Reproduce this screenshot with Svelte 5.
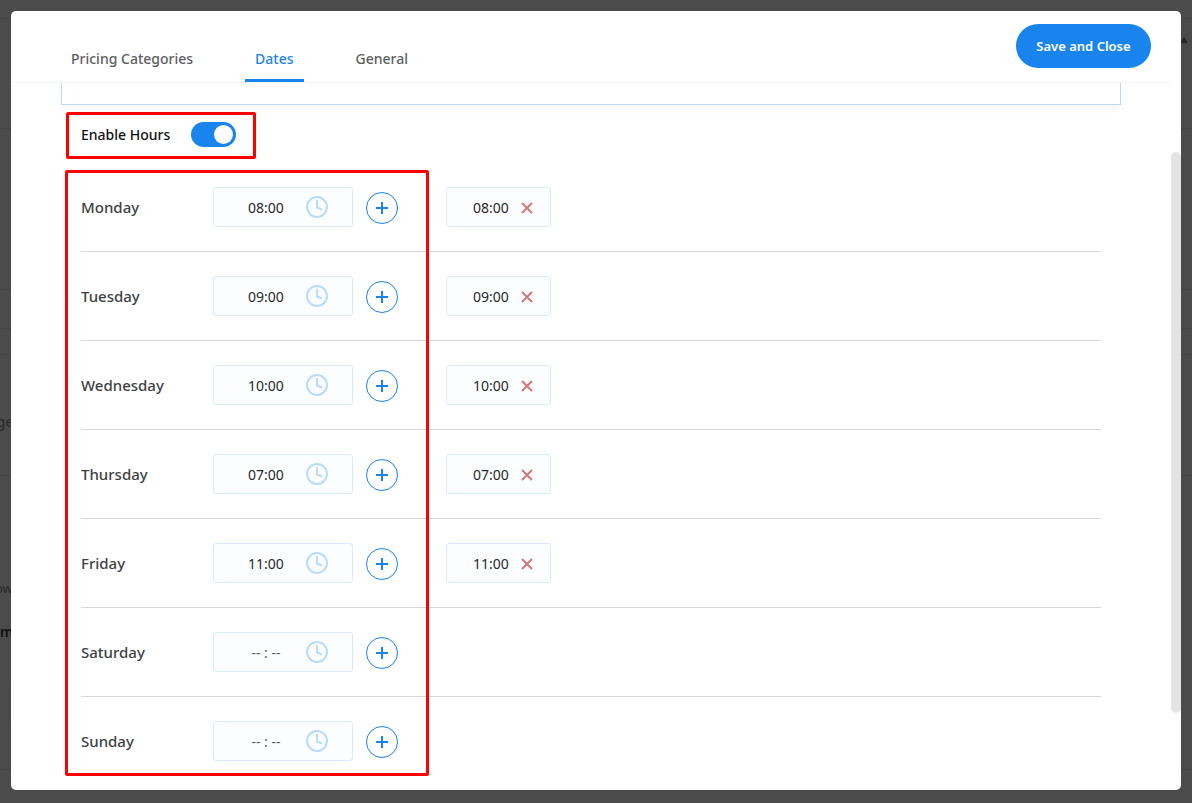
<script>
  const tabs = ['Pricing Categories', 'Dates', 'General'];
  let active = $state('Dates');
  let hoursEnabled = $state(true);
  let days = $state([
    { name: 'Monday', time: '08:00', saved: ['08:00'] },
    { name: 'Tuesday', time: '09:00', saved: ['09:00'] },
    { name: 'Wednesday', time: '10:00', saved: ['10:00'] },
    { name: 'Thursday', time: '07:00', saved: ['07:00'] },
    { name: 'Friday', time: '11:00', saved: ['11:00'] },
    { name: 'Saturday', time: '', saved: [] },
    { name: 'Sunday', time: '', saved: [] }
  ]);

  function add(day) {
    if (day.time) day.saved.push(day.time);
  }

  // Divider lines of the dimmed page behind the dialog
  const dividers = [18, 128, 289, 328, 354, 475, 769];
</script>

<div class="page">
  <div class="backdrop" aria-hidden="true">
    {#each dividers as y}
      <i class="divider" style="top: {y}px"></i>
    {/each}
    <i class="field"></i>
    <span class="peek peek-a">ge</span>
    <span class="peek peek-b">ow</span>
    <span class="peek peek-c">m</span>
    <svg class="caret" width="10" height="6" viewBox="0 0 10 6"><path d="M5 0L9 6H1Z" fill="#25272b" /></svg>
  </div>

  <main class="dialog">
    <header>
      <nav>
        {#each tabs as tab}
          <button class="tab" class:active={tab === active} onclick={() => (active = tab)}>{tab}</button>
        {/each}
      </nav>
      <button class="save">Save and Close</button>
    </header>

    <div class="panel"></div>

    <section class="content">
      <div class="enable">
        <label for="hours">Enable Hours</label>
        <input id="hours" class="toggle" type="checkbox" bind:checked={hoursEnabled} />
      </div>

      <div class="schedule">
        {#each days as day, i}
          <div class="row">
            <label class="day" for="time-{i}">{day.name}</label>
            <div class="time">
              <input id="time-{i}" type="text" placeholder="-- : --" bind:value={day.time} />
              <svg width="22" height="22" viewBox="0 0 22 22" fill="none" stroke="#b9dcfb" stroke-width="2">
                <circle cx="11" cy="11" r="10" />
                <path d="M11 4V11.5L16 13.5" />
              </svg>
            </div>
            <button class="add" aria-label="Add" onclick={() => add(day)}>
              <svg width="12" height="12" viewBox="0 0 12 12"><path d="M6 0V12M0 6H12" stroke="#1a84ee" stroke-width="2" /></svg>
            </button>
            {#each day.saved as time, j}
              <div class="saved">
                <span>{time}</span>
                <button aria-label="Remove" onclick={() => day.saved.splice(j, 1)}>
                  <svg width="12" height="12" viewBox="0 0 12 12"><path d="M1 1L11 11M11 1L1 11" stroke="#d47777" stroke-width="2" /></svg>
                </button>
              </div>
            {/each}
          </div>
        {/each}
      </div>
    </section>
    <i class="thumb"></i>
  </main>
</div>

<style>
  :global(body) {
    margin: 0;
    background: #4b4b4b;
  }
  .page {
    position: relative;
    box-sizing: border-box;
    min-height: 100vh;
    padding: 11px 11px 13px;
    overflow: hidden;
    font-family: 'Segoe UI', 'Noto Sans', sans-serif;
    color: #3d3f42;
  }
  button,
  input {
    font: inherit;
    margin: 0;
    padding: 0;
    border: 0;
    background: none;
  }
  button {
    cursor: pointer;
  }
  svg {
    display: block;
    flex: none;
  }
  .backdrop {
    position: absolute;
    inset: 0;
  }
  .divider {
    position: absolute;
    left: 0;
    right: 0;
    height: 1px;
    background: #424446;
  }
  .field {
    position: absolute;
    top: 687px;
    left: 8px;
    width: 100px;
    height: 38px;
    border: 1px solid #42474c;
    border-radius: 4px;
  }
  .peek {
    position: absolute;
    width: 30px;
    line-height: 20px;
    color: #25272b;
  }
  .peek-a {
    top: 411px;
    left: -4px;
    font-size: 15px;
  }
  .peek-b {
    top: 578px;
    left: -5px;
    font-size: 13px;
  }
  .peek-c {
    top: 622px;
    left: 0;
    font-size: 14px;
    font-weight: 600;
    color: #111;
  }
  .caret {
    position: absolute;
    top: 37px;
    right: 3px;
  }
  .dialog {
    position: relative;
    padding-bottom: 29px;
    background: #fff;
    border-radius: 5px;
  }
  header {
    display: flex;
    justify-content: space-between;
    align-items: flex-start;
    height: 71px;
    margin-right: 10px;
    padding: 0 20px 0 50px;
    border-bottom: 1px solid #f5f5f5;
    box-sizing: content-box;
  }
  nav {
    display: flex;
    gap: 42px;
    height: 71px;
  }
  .tab {
    box-sizing: border-box;
    padding: 26px 10px 0;
    border-bottom: 3px solid transparent;
    font-size: 14px;
    font-weight: 500;
    color: #5b5e61;
  }
  .tab.active {
    color: #1a84ee;
    border-color: #1a84ee;
  }
  .save {
    min-width: 135px;
    height: 44px;
    margin-top: 13px;
    padding: 0 16px;
    border-radius: 22px;
    background: #1a84ee;
    color: #fff;
    font-size: 13px;
    font-weight: 600;
  }
  .panel {
    height: 21px;
    margin: 0 60px 0 50px;
    border: 1px solid #b9dcfb;
    border-top: 0;
    box-shadow: 0 4px 8px rgba(0, 0, 0, 0.04);
  }
  .content {
    padding: 7px 80px 0 55px;
  }
  .enable {
    display: inline-flex;
    align-items: center;
    gap: 21px;
    box-sizing: border-box;
    height: 47px;
    padding: 0 17px 2px 12px;
    border: 3px solid #f00;
    border-radius: 2px;
    font-size: 14px;
    font-weight: 500;
    color: #111;
    vertical-align: top;
  }
  .toggle {
    appearance: none;
    position: relative;
    width: 45px;
    height: 25px;
    border-radius: 13px;
    background: #b5bac0;
    cursor: pointer;
  }
  .toggle::after {
    content: '';
    position: absolute;
    top: 3px;
    left: 3px;
    width: 19px;
    height: 19px;
    border-radius: 50%;
    background: #fff;
  }
  .toggle:checked {
    background: #1a84ee;
  }
  .toggle:checked::after {
    left: 23px;
  }
  .schedule {
    position: relative;
    padding: 28px 0 0 15px;
  }
  /* Highlight frame over the weekday inputs */
  .schedule::after {
    content: '';
    position: absolute;
    top: 11px;
    bottom: -15px;
    left: -1px;
    width: 358px;
    border: 3px solid #f00;
    border-radius: 2px;
    pointer-events: none;
  }
  .row {
    display: flex;
    align-items: center;
    padding-bottom: 24px;
    margin-bottom: 24px;
    border-bottom: 1px solid #d8d8d8;
  }
  .row:last-child {
    padding-bottom: 0;
    margin-bottom: 0;
    border-bottom: 0;
  }
  .day {
    width: 132px;
    font-size: 15px;
    font-weight: 500;
  }
  .time,
  .saved {
    display: flex;
    align-items: center;
    box-sizing: border-box;
    height: 40px;
    border: 1px solid #d9ebfb;
    border-radius: 3px;
    background: #fbfdff;
    font-size: 14px;
    color: #26282b;
  }
  .time {
    width: 140px;
    padding: 0 24px 0 12px;
  }
  .time input {
    width: 80px;
    height: 38px;
    box-sizing: border-box;
    text-align: center;
    color: inherit;
    outline: 0;
  }
  .time input::placeholder {
    color: #5b5e61;
    opacity: 1;
  }
  .add {
    display: grid;
    place-items: center;
    box-sizing: border-box;
    width: 32px;
    height: 32px;
    margin: 2px 48px 0 13px;
    border: 1px solid #1a84ee;
    border-radius: 50%;
  }
  .saved {
    width: 105px;
    padding: 1px 0 0 26px;
    gap: 12px;
  }
  .thumb {
    position: absolute;
    top: 141px;
    right: 0;
    width: 10px;
    height: 561px;
    border-radius: 5px;
    background: #e4e4e4;
  }
</style>
